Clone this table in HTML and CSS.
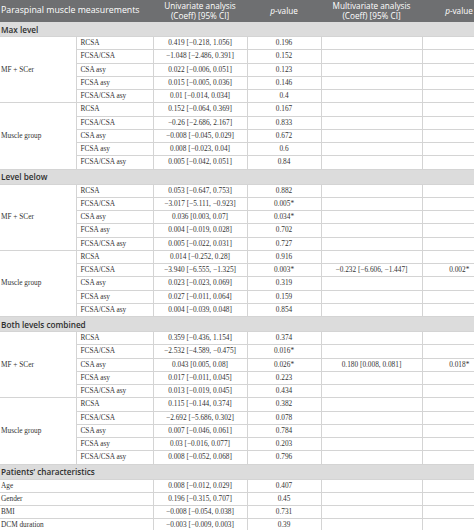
FILE: index.html
```
<!DOCTYPE html>
<html>
<head>
<meta charset="utf-8">
<link rel="stylesheet" href="styles.css">
</head>
<body>
<table class="tbl">
<colgroup>
<col class="c1"><col class="c2"><col class="c3"><col class="c4"><col class="c5"><col class="c6">
</colgroup>
<thead>
<tr class="hd">
<th colspan="2" class="hl">Paraspinal muscle measurements</th>
<th>Univariate analysis<br>(Coeff) [95% CI]</th>
<th><i>p</i>-value</th>
<th>Multivariate analysis<br>(Coeff) [95% CI]</th>
<th><i>p</i>-value</th>
</tr>
</thead>
<tbody>
<tr class="sec"><td colspan="6">Max level</td></tr>
<tr class="r"><td rowspan="5" class="g">MF + SCer</td><td class="m">RCSA</td><td>0.419 [−0.218, 1.056]</td><td>0.196</td><td></td><td></td></tr>
<tr class="r"><td class="m">FCSA/CSA</td><td>−1.048 [−2.486, 0.391]</td><td>0.152</td><td></td><td></td></tr>
<tr class="r"><td class="m">CSA asy</td><td>0.022 [−0.006, 0.051]</td><td>0.123</td><td></td><td></td></tr>
<tr class="r"><td class="m">FCSA asy</td><td>0.015 [−0.005, 0.036]</td><td>0.146</td><td></td><td></td></tr>
<tr class="r"><td class="m">FCSA/CSA asy</td><td>0.01 [−0.014, 0.034]</td><td>0.4</td><td></td><td></td></tr>
<tr class="r"><td rowspan="5" class="g">Muscle group</td><td class="m">RCSA</td><td>0.152 [−0.064, 0.369]</td><td>0.167</td><td></td><td></td></tr>
<tr class="r"><td class="m">FCSA/CSA</td><td>−0.26 [−2.686, 2.167]</td><td>0.833</td><td></td><td></td></tr>
<tr class="r"><td class="m">CSA asy</td><td>−0.008 [−0.045, 0.029]</td><td>0.672</td><td></td><td></td></tr>
<tr class="r"><td class="m">FCSA asy</td><td>0.008 [−0.023, 0.04]</td><td>0.6</td><td></td><td></td></tr>
<tr class="r"><td class="m">FCSA/CSA asy</td><td>0.005 [−0.042, 0.051]</td><td>0.84</td><td></td><td></td></tr>

<tr class="sec"><td colspan="6">Level below</td></tr>
<tr class="r"><td rowspan="5" class="g">MF + SCer</td><td class="m">RCSA</td><td>0.053 [−0.647, 0.753]</td><td>0.882</td><td></td><td></td></tr>
<tr class="r"><td class="m">FCSA/CSA</td><td>−3.017 [−5.111, −0.923]</td><td>0.005*</td><td></td><td></td></tr>
<tr class="r"><td class="m">CSA asy</td><td>0.036 [0.003, 0.07]</td><td>0.034*</td><td></td><td></td></tr>
<tr class="r"><td class="m">FCSA asy</td><td>0.004 [−0.019, 0.028]</td><td>0.702</td><td></td><td></td></tr>
<tr class="r"><td class="m">FCSA/CSA asy</td><td>0.005 [−0.022, 0.031]</td><td>0.727</td><td></td><td></td></tr>
<tr class="r"><td rowspan="5" class="g">Muscle group</td><td class="m">RCSA</td><td>0.014 [−0.252, 0.28]</td><td>0.916</td><td></td><td></td></tr>
<tr class="r"><td class="m">FCSA/CSA</td><td>−3.940 [−6.555, −1.325]</td><td>0.003*</td><td>−0.232 [−6.606, −1.447]</td><td>0.002*</td></tr>
<tr class="r"><td class="m">CSA asy</td><td>0.023 [−0.023, 0.069]</td><td>0.319</td><td></td><td></td></tr>
<tr class="r"><td class="m">FCSA asy</td><td>0.027 [−0.011, 0.064]</td><td>0.159</td><td></td><td></td></tr>
<tr class="r"><td class="m">FCSA/CSA asy</td><td>0.004 [−0.039, 0.048]</td><td>0.854</td><td></td><td></td></tr>

<tr class="sec"><td colspan="6">Both levels combined</td></tr>
<tr class="r"><td rowspan="5" class="g">MF + SCer</td><td class="m">RCSA</td><td>0.359 [−0.436, 1.154]</td><td>0.374</td><td></td><td></td></tr>
<tr class="r"><td class="m">FCSA/CSA</td><td>−2.532 [−4.589, −0.475]</td><td>0.016*</td><td></td><td></td></tr>
<tr class="r"><td class="m">CSA asy</td><td>0.043 [0.005, 0.08]</td><td>0.026*</td><td>0.180 [0.008, 0.081]</td><td>0.018*</td></tr>
<tr class="r"><td class="m">FCSA asy</td><td>0.017 [−0.011, 0.045]</td><td>0.223</td><td></td><td></td></tr>
<tr class="r"><td class="m">FCSA/CSA asy</td><td>0.013 [−0.019, 0.045]</td><td>0.434</td><td></td><td></td></tr>
<tr class="r"><td rowspan="5" class="g">Muscle group</td><td class="m">RCSA</td><td>0.115 [−0.144, 0.374]</td><td>0.382</td><td></td><td></td></tr>
<tr class="r"><td class="m">FCSA/CSA</td><td>−2.692 [−5.686, 0.302]</td><td>0.078</td><td></td><td></td></tr>
<tr class="r"><td class="m">CSA asy</td><td>0.007 [−0.046, 0.061]</td><td>0.784</td><td></td><td></td></tr>
<tr class="r"><td class="m">FCSA asy</td><td>0.03 [−0.016, 0.077]</td><td>0.203</td><td></td><td></td></tr>
<tr class="r"><td class="m">FCSA/CSA asy</td><td>0.008 [−0.052, 0.068]</td><td>0.796</td><td></td><td></td></tr>

<tr class="sec"><td colspan="6">Patients’ characteristics</td></tr>
<tr class="r"><td colspan="2" class="g">Age</td><td>0.008 [−0.012, 0.029]</td><td>0.407</td><td></td><td></td></tr>
<tr class="r"><td colspan="2" class="g">Gender</td><td>0.196 [−0.315, 0.707]</td><td>0.45</td><td></td><td></td></tr>
<tr class="r"><td colspan="2" class="g">BMI</td><td>−0.008 [−0.054, 0.038]</td><td>0.731</td><td></td><td></td></tr>
<tr class="r"><td colspan="2" class="g">DCM duration</td><td>−0.003 [−0.009, 0.003]</td><td>0.39</td><td></td><td></td></tr>
</tbody>
</table>
</body>
</html>
```
FILE: styles.css
```
html, body {
  margin: 0;
  padding: 0;
  background: #ffffff;
  overflow: hidden;
}
body {
  width: 474px;
  height: 530px;
}
.tbl {
  border-collapse: collapse;
  table-layout: fixed;
  width: 496px;
  font-family: "Liberation Serif", "Times New Roman", serif;
  font-size: 7.3px;
  color: #333333;
}
.c1 { width: 76px; }
.c2 { width: 77px; }
.c3 { width: 94px; }
.c4 { width: 74px; }
.c5 { width: 101px; }
.c6 { width: 74px; }

.hd th {
  background: #6e6f71;
  color: #ffffff;
  font-family: "Open Sans", "DejaVu Sans", sans-serif;
  font-weight: 400;
  font-size: 8.2px;
  line-height: 9.6px;
  height: 22px;
  padding: 0;
  text-align: center;
  vertical-align: middle;
}
.hd th.hl {
  text-align: left;
  padding-left: 1px;
  font-size: 8.8px;
}
.sec td {
  background: #dcdcdc;
  height: 14px;
  padding: 0 0 0 1px;
  font-family: "Open Sans", "DejaVu Sans", sans-serif;
  font-weight: 600;
  font-size: 8.2px;
  color: #2e2e2e;
  line-height: 13px;
}
.r {
  height: 13.26px;
}
.r td {
  padding: 0;
  line-height: 8px;
  text-align: center;
  vertical-align: middle;
  border: 1px solid #d4d4d4;
  white-space: nowrap;
}
.r td.m {
  text-align: left;
  padding-left: 4px;
}
.r td.g {
  text-align: left;
  padding-left: 1px;
  border-left: none;
}
.r td:last-child {
  border-right: none;
}
```
